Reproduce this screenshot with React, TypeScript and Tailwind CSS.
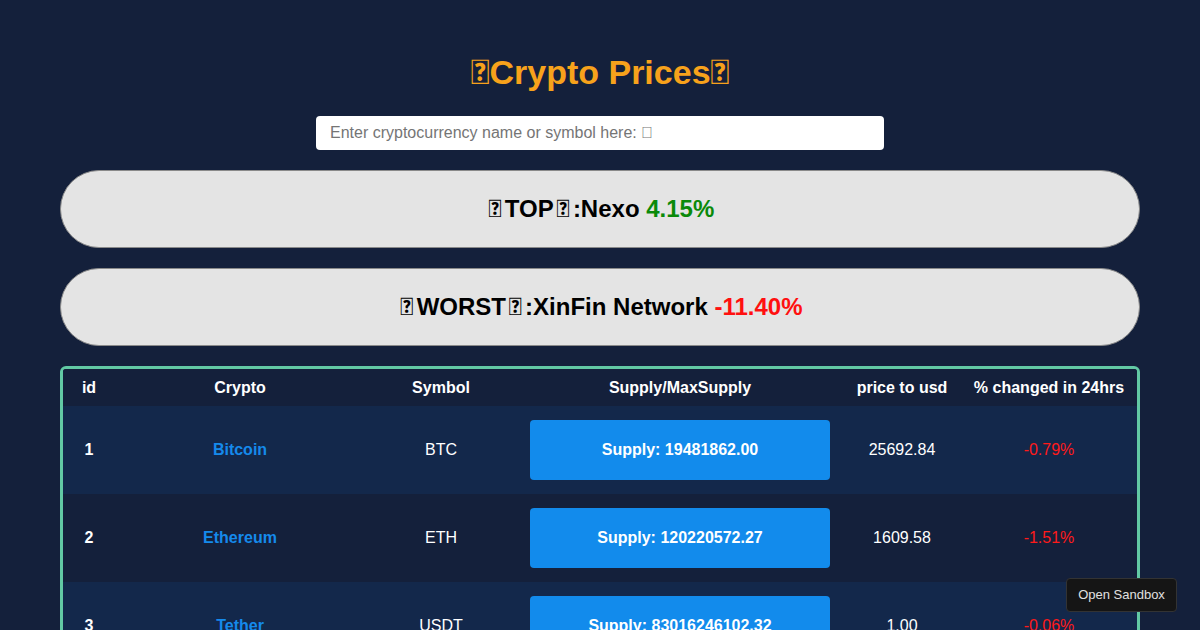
import React from "react";

const rows = [
  { id: 1, name: "Bitcoin", sym: "BTC", supply: "19481862.00", price: "25692.84", chg: "-0.79%" },
  { id: 2, name: "Ethereum", sym: "ETH", supply: "120220572.27", price: "1609.58", chg: "-1.51%" },
  { id: 3, name: "Tether", sym: "USDT", supply: "83016246102.32", price: "1.00", chg: "-0.06%" },
];

const T = "\u{F0001}";
const Tofu = ({ wide }: { wide?: boolean }) => (
  <span className={wide ? "mx-[3px] leading-none" : "leading-none"} style={{ fontFamily: "Lato" }}>{T}</span>
);

export default function App() {
  return (
    <div
      className="w-[1200px] h-[630px] overflow-hidden bg-[#14203b] relative"
      style={{ fontFamily: '"Liberation Sans", Arial, sans-serif' }}
    >
      <div className="flex flex-col items-center pt-[52px] px-[60px]">
        <h1 className="h-[40px] text-[34px] leading-[40px] font-bold text-[#f7a21b]"><Tofu />Crypto Prices<Tofu /></h1>
        <input
          className="mt-[24px] w-[568px] h-[34px] rounded-[4px] bg-white px-[14px] text-[16px] text-[#333] placeholder:text-[#757575] outline-none"
          style={{ fontFamily: '"Liberation Sans", Lato, sans-serif' }}
          placeholder={`Enter cryptocurrency name or symbol here: ${T}`}
        />
        <div className="mt-[20px] w-[1080px] h-[78px] rounded-full bg-[#e4e4e4] border border-[#8a8a8a] flex items-center justify-center text-[24px] font-bold text-black">
          <span className="h-[28px] leading-[28px]"><Tofu wide />TOP<Tofu wide />:Nexo <span className="text-[#0a8a0a]">4.15%</span></span>
        </div>
        <div className="mt-[20px] w-[1080px] h-[78px] rounded-full bg-[#e4e4e4] border border-[#8a8a8a] flex items-center justify-center text-[24px] font-bold text-black">
          <span className="h-[28px] leading-[28px]"><Tofu wide />WORST<Tofu wide />:XinFin Network <span className="text-[#ff1010]">-11.40%</span></span>
        </div>
        <div className="mt-[20px] w-[1080px] border-[3px] border-[#62c9a4] rounded-t-[6px] overflow-hidden">
          <table className="w-full border-collapse text-white text-[16px]">
            <thead>
              <tr className="h-[37px] bg-[#14203b] font-bold">
                <th className="w-[52px] font-bold">id</th>
                <th className="w-[250px] font-bold">Crypto</th>
                <th className="w-[152px] font-bold">Symbol</th>
                <th className="w-[326px] font-bold">Supply/MaxSupply</th>
                <th className="w-[118px] font-bold">price to usd</th>
                <th className="font-bold">% changed in 24hrs</th>
              </tr>
            </thead>
            <tbody>
              {rows.map((r, i) => (
                <tr key={r.id} className={i % 2 === 0 ? "h-[88px] bg-[#13284b]" : "h-[88px] bg-[#14203b]"}>
                  <td className="text-center font-bold">{r.id}</td>
                  <td className="text-center font-bold text-[#158aec]">{r.name}</td>
                  <td className="text-center">{r.sym}</td>
                  <td className="text-center">
                    <div className="mx-auto w-[300px] h-[60px] rounded-[4px] bg-[#128bec] flex items-center justify-center font-bold">
                      Supply: {r.supply}
                    </div>
                  </td>
                  <td className="text-center">{r.price}</td>
                  <td className="text-center text-[#ff1a1a]">{r.chg}</td>
                </tr>
              ))}
            </tbody>
          </table>
        </div>
      </div>
      <div className="absolute left-[1066px] top-[578px] w-[111px] h-[34px] rounded-[4px] bg-[#151515] border border-[#333] flex items-center justify-center text-[13px] text-[#e0e0e0]">
        Open Sandbox
      </div>
    </div>
  );
}
